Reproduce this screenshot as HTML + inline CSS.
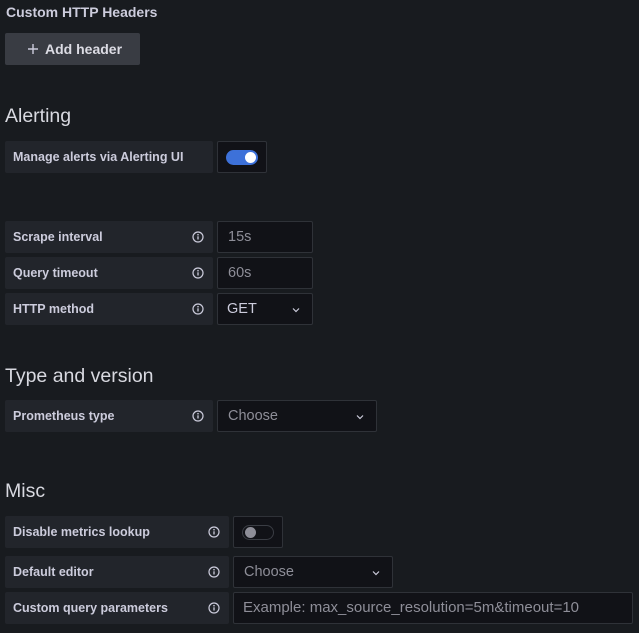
<!DOCTYPE html>
<html><head><style>
body{margin:0;background:#181b1f;width:639px;height:633px;overflow:hidden;font-family:"Liberation Sans",sans-serif;color:#ccccdc;position:relative}
.a{position:absolute;box-sizing:border-box}
.lbl{background:#22252b;border-radius:2px;font-size:12.5px;font-weight:bold;color:#ccccdc;padding-left:8px;line-height:32px;height:32px}
.inp{background:#111217;border:1px solid #2f3238;border-radius:2px;height:32px;font-size:14.5px;line-height:30px;padding-left:10px;color:#ccccdc}
.ph{color:#8e8e98}
.h{font-size:19.5px;color:#d8d9e0}
.chev{position:absolute;top:13px;width:8px;height:6px}
</style></head><body>
<div class="a" style="left:6px;top:4px;font-size:14px;font-weight:bold;color:#ccccdc">Custom HTTP Headers</div>
<div class="a" style="left:5px;top:33px;width:135px;height:32px;background:#393c43;border-radius:2px;font-size:14px;font-weight:bold;line-height:32px;padding-left:40px;color:#dcdce4">Add header
<svg style="position:absolute;left:22px;top:10px" width="12" height="12" viewBox="0 0 12 12"><path d="M6 1v10M1 6h10" stroke="#ccccdc" stroke-width="1.4"/></svg></div>

<div class="a h" style="left:5px;top:105px">Alerting</div>
<div class="a lbl" style="left:5px;top:141px;width:208px">Manage alerts via Alerting UI</div>
<div class="a inp" style="left:217px;top:141px;width:50px;padding:0">
<div style="position:absolute;left:8px;top:8px;width:32px;height:15px;border-radius:8px;background:#3d71d9"></div>
<div style="position:absolute;left:27px;top:10px;width:11px;height:11px;border-radius:50%;background:#fff"></div></div>

<div class="a lbl" style="left:5px;top:221px;width:208px">Scrape interval</div>
<div class="a inp ph" style="left:217px;top:221px;width:96px">15s</div>
<div class="a lbl" style="left:5px;top:257px;width:208px">Query timeout</div>
<div class="a inp ph" style="left:217px;top:257px;width:96px">60s</div>
<div class="a lbl" style="left:5px;top:293px;width:208px">HTTP method</div>
<div class="a inp" style="left:217px;top:293px;width:96px;padding-left:9px">GET
<svg class="chev" style="left:74px" viewBox="0 0 8 6"><path d="M1 1.5l3 3 3-3" stroke="#ccccdc" fill="none" stroke-width="1.2"/></svg></div>

<div class="a h" style="left:5px;top:365px">Type and version</div>
<div class="a lbl" style="left:5px;top:400px;width:208px">Prometheus type</div>
<div class="a inp ph" style="left:217px;top:400px;width:160px">Choose
<svg class="chev" style="left:138px" viewBox="0 0 8 6"><path d="M1 1.5l3 3 3-3" stroke="#ccccdc" fill="none" stroke-width="1.2"/></svg></div>

<div class="a h" style="left:5px;top:480px">Misc</div>
<div class="a lbl" style="left:5px;top:516px;width:224px">Disable metrics lookup</div>
<div class="a inp" style="left:233px;top:516px;width:50px;padding:0">
<div style="position:absolute;left:8px;top:8px;width:32px;height:15px;border-radius:8px;border:1px solid #3a3d44;box-sizing:border-box"></div>
<div style="position:absolute;left:11px;top:10px;width:11px;height:11px;border-radius:50%;background:#8e8e98"></div></div>
<div class="a lbl" style="left:5px;top:556px;width:224px">Default editor</div>
<div class="a inp ph" style="left:233px;top:556px;width:160px">Choose
<svg class="chev" style="left:138px" viewBox="0 0 8 6"><path d="M1 1.5l3 3 3-3" stroke="#ccccdc" fill="none" stroke-width="1.2"/></svg></div>
<div class="a lbl" style="left:5px;top:592px;width:224px">Custom query parameters</div>
<div class="a inp ph" style="left:233px;top:592px;width:400px;padding-left:9px;font-size:15px">Example: max_source_resolution=5m&amp;timeout=10</div>

<svg class="a" width="0" height="0"><defs><g id="i"><circle cx="6" cy="6" r="5" stroke="#ccccdc" stroke-width="1.2" fill="none"/><path d="M6 5.3v3.2" stroke="#ccccdc" stroke-width="1.3"/><circle cx="6" cy="3.7" r="0.8" fill="#ccccdc"/></g></defs></svg>
<svg class="a" style="left:192px;top:231px" width="12" height="12"><use href="#i"/></svg>
<svg class="a" style="left:192px;top:267px" width="12" height="12"><use href="#i"/></svg>
<svg class="a" style="left:192px;top:303px" width="12" height="12"><use href="#i"/></svg>
<svg class="a" style="left:192px;top:410px" width="12" height="12"><use href="#i"/></svg>
<svg class="a" style="left:208px;top:526px" width="12" height="12"><use href="#i"/></svg>
<svg class="a" style="left:208px;top:566px" width="12" height="12"><use href="#i"/></svg>
<svg class="a" style="left:208px;top:602px" width="12" height="12"><use href="#i"/></svg>
</body></html>
